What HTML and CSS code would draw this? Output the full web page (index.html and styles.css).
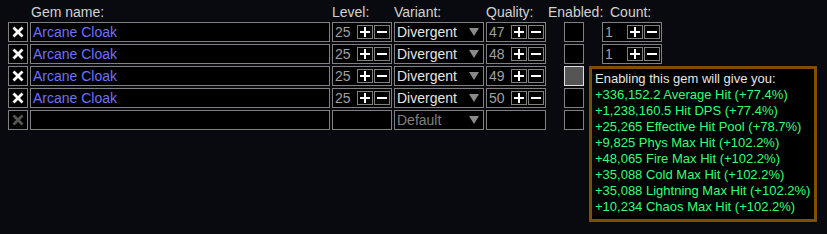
FILE: index.html
```html
<!DOCTYPE html>
<html lang="en">
<head>
  <meta charset="UTF-8" />
  <title>Skill gems</title>
  <link rel="stylesheet" href="styles.css">
</head>
<body>
  <div class="gems">
    <div class="gem-grid">
      <div class="head"></div>
      <div class="head head-name">Gem name:</div>
      <div class="head">Level:</div>
      <div class="head">Variant:</div>
      <div class="head">Quality:</div>
      <div class="head">Enabled:</div>
      <div class="head head-count">Count:</div>

      <!-- row 1 -->
      <button class="del"><svg viewBox="0 0 12 12"><path d="M1.5 1.5L10.5 10.5M10.5 1.5L1.5 10.5"/></svg></button>
      <div class="box name">Arcane Cloak</div>
      <div class="box num">25<span class="btns"><span class="pm plus"></span><span class="pm minus"></span></span></div>
      <div class="box variant">Divergent<span class="arrow"></span></div>
      <div class="box num">47<span class="btns"><span class="pm plus"></span><span class="pm minus"></span></span></div>
      <div class="check"></div>
      <div class="box num count">1<span class="btns"><span class="pm plus"></span><span class="pm minus"></span></span></div>

      <!-- row 2 -->
      <button class="del"><svg viewBox="0 0 12 12"><path d="M1.5 1.5L10.5 10.5M10.5 1.5L1.5 10.5"/></svg></button>
      <div class="box name">Arcane Cloak</div>
      <div class="box num">25<span class="btns"><span class="pm plus"></span><span class="pm minus"></span></span></div>
      <div class="box variant">Divergent<span class="arrow"></span></div>
      <div class="box num">48<span class="btns"><span class="pm plus"></span><span class="pm minus"></span></span></div>
      <div class="check"></div>
      <div class="box num count">1<span class="btns"><span class="pm plus"></span><span class="pm minus"></span></span></div>

      <!-- row 3 -->
      <button class="del"><svg viewBox="0 0 12 12"><path d="M1.5 1.5L10.5 10.5M10.5 1.5L1.5 10.5"/></svg></button>
      <div class="box name">Arcane Cloak</div>
      <div class="box num">25<span class="btns"><span class="pm plus"></span><span class="pm minus"></span></span></div>
      <div class="box variant">Divergent<span class="arrow"></span></div>
      <div class="box num">49<span class="btns"><span class="pm plus"></span><span class="pm minus"></span></span></div>
      <div class="check hover"></div>
      <div class="box num count">1<span class="btns"><span class="pm plus"></span><span class="pm minus"></span></span></div>

      <!-- row 4 -->
      <button class="del"><svg viewBox="0 0 12 12"><path d="M1.5 1.5L10.5 10.5M10.5 1.5L1.5 10.5"/></svg></button>
      <div class="box name">Arcane Cloak</div>
      <div class="box num">25<span class="btns"><span class="pm plus"></span><span class="pm minus"></span></span></div>
      <div class="box variant">Divergent<span class="arrow"></span></div>
      <div class="box num">50<span class="btns"><span class="pm plus"></span><span class="pm minus"></span></span></div>
      <div class="check"></div>
      <div class="box num count">1<span class="btns"><span class="pm plus"></span><span class="pm minus"></span></span></div>

      <!-- empty slot -->
      <button class="del off"><svg viewBox="0 0 12 12"><path d="M1.5 1.5L10.5 10.5M10.5 1.5L1.5 10.5"/></svg></button>
      <div class="box name"></div>
      <div class="box num"></div>
      <div class="box variant off">Default<span class="arrow"></span></div>
      <div class="box num"></div>
      <div class="check"></div>
      <div></div>
    </div>

    <div class="tooltip">
      <div class="tip-title">Enabling this gem will give you:</div>
      <div class="pos">+336,152.2 Average Hit (+77.4%)</div>
      <div class="pos">+1,238,160.5 Hit DPS (+77.4%)</div>
      <div class="pos">+25,265 Effective Hit Pool (+78.7%)</div>
      <div class="pos">+9,825 Phys Max Hit (+102.2%)</div>
      <div class="pos">+48,065 Fire Max Hit (+102.2%)</div>
      <div class="pos">+35,088 Cold Max Hit (+102.2%)</div>
      <div class="pos">+35,088 Lightning Max Hit (+102.2%)</div>
      <div class="pos">+10,234 Chaos Max Hit (+102.2%)</div>
    </div>
  </div>
</body>
</html>
```

FILE: styles.css
```css
:root {
  --bg: #080a0f;
  --border: #808080;
  --label: #d2d2d2;
  --value: #a0a0a0;
  --gem-int: #7070ff;
  --positive: #33ff77;
  --tip-border: #7f5000;
}

body {
  margin: 0;
  background-color: var(--bg);
  color: var(--label);
  font-family: "Liberation Sans", Arial, sans-serif;
  font-size: 14px;
}

.gems {
  position: relative;
  padding: 0 8px;
  height: 234px;
}

.gem-grid {
  display: grid;
  grid-template-columns: 20px 300px 60px 90px 60px 36px 76px;
  grid-template-rows: repeat(6, 20px);
  gap: 2px;
}

.head {
  padding-top: 4px;
  line-height: 16px;
  white-space: nowrap;
}

.head-name {
  padding-left: 1px;
}

.head-count {
  padding-left: 24px;
}

.box {
  box-sizing: border-box;
  height: 20px;
  border: 1px solid var(--border);
  background-color: #000;
  line-height: 18px;
  padding-left: 2px;
  display: flex;
  align-items: center;
  white-space: nowrap;
}

.name {
  color: var(--gem-int);
}

.num {
  color: var(--value);
}

.count {
  width: 60px;
  justify-self: end;
}

.btns {
  margin-left: auto;
  margin-right: 1px;
  display: flex;
  gap: 1px;
}

.pm {
  box-sizing: border-box;
  width: 16px;
  height: 14px;
  border: 1px solid var(--border);
  position: relative;
}

.pm::before,
.plus::after {
  content: "";
  position: absolute;
  background-color: #fff;
  left: 2px;
  right: 2px;
  top: 5px;
  height: 2px;
}

.plus::after {
  left: 6px;
  right: 6px;
  top: 1px;
  bottom: 1px;
  width: 2px;
  height: auto;
}

.variant {
  color: #e6e6e6;
}

.variant.off {
  color: #808080;
}

.arrow {
  margin-left: auto;
  margin-right: 4px;
  width: 0;
  height: 0;
  border-left: 5px solid transparent;
  border-right: 5px solid transparent;
  border-top: 8px solid #8a8a8a;
}

.check {
  box-sizing: border-box;
  width: 20px;
  height: 20px;
  justify-self: end;
  border: 1px solid var(--border);
  background-color: #000;
}

.check.hover {
  border-color: #e0e0e0;
  background-color: #555;
}

.del {
  box-sizing: border-box;
  width: 20px;
  height: 20px;
  padding: 3px;
  margin: 0;
  border: 1px solid var(--border);
  background-color: #000;
  display: flex;
}

.del svg {
  width: 12px;
  height: 12px;
  fill: none;
  stroke: #fff;
  stroke-width: 2.8;
}

.del.off svg {
  stroke: #555;
}

/* hover tooltip for the third gem's enable box */
.tooltip {
  position: absolute;
  left: 589px;
  top: 66px;
  width: 228px;
  box-sizing: border-box;
  border: 3px solid var(--tip-border);
  background-color: rgba(0, 0, 0, 0.93);
  padding: 2px 3px 4px 3px;
  font-size: 13px;
  line-height: 16px;
  white-space: nowrap;
}

.tip-title {
  color: #e6e6e6;
}

.pos {
  color: var(--positive);
}
```
